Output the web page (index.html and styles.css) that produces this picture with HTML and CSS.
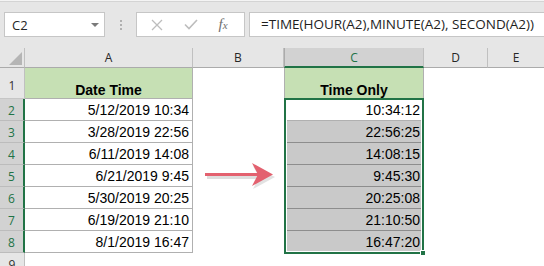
FILE: index.html
```html
<!DOCTYPE html>
<html lang="en">
<head>
	<meta charset="UTF-8">
	<title>Time Only</title>
	<link rel="stylesheet" href="styles.css">
</head>
<body>
	<div class="toolbar">
		<div class="namebox"><span>C2</span><i class="caret"></i></div>
		<div class="grip"><i></i><i></i><i></i></div>
		<div class="fxbtns">
			<svg class="ico" width="12" height="12" viewBox="0 0 12 12"><path d="M1 1L11 11M11 1L1 11" stroke="#bdbdbd" stroke-width="1.3" fill="none"/></svg>
			<svg class="ico" width="14" height="11" viewBox="0 0 14 11"><path d="M1 5.5L5 9.5L13 1" stroke="#bdbdbd" stroke-width="1.6" fill="none"/></svg>
			<span class="fx">f<small>x</small></span>
		</div>
		<div class="formula">=TIME(HOUR(A2),MINUTE(A2), SECOND(A2))</div>
	</div>

	<div class="sheet">
		<!-- column headers -->
		<div class="corner"><i></i></div>
		<div class="colhead">A</div>
		<div class="colhead">B</div>
		<div class="colhead sel">C</div>
		<div class="colhead">D</div>
		<div class="colhead last">E</div>

		<!-- row headers -->
		<div class="rowhead" style="grid-row:2">1</div>
		<div class="rowhead sel" style="grid-row:3">2</div>
		<div class="rowhead sel" style="grid-row:4">3</div>
		<div class="rowhead sel" style="grid-row:5">4</div>
		<div class="rowhead sel" style="grid-row:6">5</div>
		<div class="rowhead sel" style="grid-row:7">6</div>
		<div class="rowhead sel" style="grid-row:8">7</div>
		<div class="rowhead sel" style="grid-row:9">8</div>
		<div class="rowhead" style="grid-row:10">9</div>

		<!-- column A -->
		<div class="cell colA title" style="grid-row:2">Date Time</div>
		<div class="cell colA" style="grid-row:3">5/12/2019 10:34</div>
		<div class="cell colA" style="grid-row:4">3/28/2019 22:56</div>
		<div class="cell colA" style="grid-row:5">6/11/2019 14:08</div>
		<div class="cell colA" style="grid-row:6">6/21/2019 9:45</div>
		<div class="cell colA" style="grid-row:7">5/30/2019 20:25</div>
		<div class="cell colA" style="grid-row:8">6/19/2019 21:10</div>
		<div class="cell colA" style="grid-row:9">8/1/2019 16:47</div>

		<!-- arrow in B5 -->
		<div class="arrow">
			<svg width="72" height="30" viewBox="0 0 72 30">
				<path d="M2 14.5H56" stroke="#c9c9c9" stroke-width="3" opacity=".6" transform="translate(1 2)"/>
				<polygon points="48,3 70,14 48,26 54,14" fill="#cfcfcf" opacity=".6" transform="translate(1 2)"/>
				<path d="M1 13.5H56" stroke="#e3616f" stroke-width="3"/>
				<polygon points="48,2 69,13.5 48,25 54,13.5" fill="#e3616f"/>
			</svg>
		</div>

		<!-- column C -->
		<div class="cell colC title" style="grid-row:2">Time Only</div>
		<div class="cell colC" style="grid-row:3">10:34:12</div>
		<div class="cell colC shade" style="grid-row:4">22:56:25</div>
		<div class="cell colC shade" style="grid-row:5">14:08:15</div>
		<div class="cell colC shade" style="grid-row:6">9:45:30</div>
		<div class="cell colC shade" style="grid-row:7">20:25:08</div>
		<div class="cell colC shade" style="grid-row:8">21:10:50</div>
		<div class="cell colC shade" style="grid-row:9">16:47:20</div>

		<div class="selection"><i class="handle"></i></div>
	</div>
</body>
</html>
```

FILE: styles.css
```css
*{
	margin: 0;
	padding: 0;
	box-sizing: border-box;
}
body{
	width: 544px;
	height: 266px;
	overflow: hidden;
	background-color: #fff;
	font-family: "Liberation Sans", Arial, sans-serif;
}

/* formula bar */
.toolbar{
	height: 48px;
	display: flex;
	align-items: flex-start;
	padding-top: 11px;
	background-color: #e6e6e6;
	border-top: 1px solid #f4f4f4;
	box-shadow: inset 0 1px #d4d4d4;
	font-family: "Open Sans", sans-serif;
}
.toolbar .namebox{
	width: 101px;
	height: 25px;
	margin-left: 4px;
	padding: 0 5px 0 7px;
	display: flex;
	align-items: center;
	justify-content: space-between;
	background-color: #fff;
	border: 1px solid #c6c6c6;
	font-size: 13px;
	color: #262626;
}
.toolbar .caret{
	width: 0;
	height: 0;
	border-left: 4px solid transparent;
	border-right: 4px solid transparent;
	border-top: 4px solid #7a7a7a;
}
.toolbar .grip{
	width: 31px;
	height: 25px;
	display: flex;
	flex-direction: column;
	align-items: center;
	justify-content: center;
	gap: 2px;
}
.toolbar .grip i{
	width: 2px;
	height: 2px;
	background-color: #b0b0b0;
}
.toolbar .fxbtns{
	width: 109px;
	height: 25px;
	display: flex;
	align-items: center;
	justify-content: space-around;
	padding: 0 6px 0 4px;
	background-color: #fff;
	border: 1px solid #c6c6c6;
}
.toolbar .fx{
	font-family: "Liberation Serif", serif;
	font-style: italic;
	font-size: 15px;
	color: #707070;
}
.toolbar .fx small{
	font-size: 11px;
}
.toolbar .formula{
	flex: 1;
	height: 25px;
	margin-left: 4px;
	padding-left: 11px;
	line-height: 23px;
	white-space: nowrap;
	background-color: #fff;
	border: 1px solid #c6c6c6;
	border-right: none;
	font-size: 13.5px;
	color: #1e1e1e;
}

/* sheet */
.sheet{
	display: grid;
	grid-template-columns: 25px 168px 91px 140px 64px 1fr;
	grid-template-rows: 20px 31px repeat(7, 22px) 22px;
}
.sheet .corner{
	grid-row: 1;
	grid-column: 1;
	position: relative;
	background-color: #e6e6e6;
	border-right: 1px solid #c0c0c0;
	border-bottom: 1px solid #ababab;
}
.sheet .corner i{
	position: absolute;
	right: 2px;
	bottom: 2px;
	width: 0;
	height: 0;
	border-left: 13px solid transparent;
	border-bottom: 13px solid #b5b5b5;
}
.sheet .colhead{
	grid-row: 1;
	display: flex;
	align-items: center;
	justify-content: center;
	background-color: #e6e6e6;
	border-right: 1px solid #c0c0c0;
	border-bottom: 1px solid #ababab;
	font-family: "Open Sans", sans-serif;
	font-size: 12px;
	color: #262626;
}
.sheet .colhead.last{
	border-right: none;
}
.sheet .colhead.sel{
	background-color: #d2d2d2;
	border-left: 1px solid #ababab;
	border-bottom: 2px solid #217346;
	color: #217346;
}
.sheet .rowhead{
	grid-column: 1;
	display: flex;
	align-items: center;
	justify-content: center;
	padding-top: 1px;
	background-color: #e6e6e6;
	border-right: 1px solid #c0c0c0;
	border-bottom: 1px solid #c6c6c6;
	font-family: "Open Sans", sans-serif;
	font-size: 12px;
	color: #333;
}
.sheet .rowhead:nth-of-type(7){
	align-items: flex-end;
	padding-bottom: 4px;
}
.sheet .rowhead.sel{
	background-color: #d2d2d2;
	border-right: 2px solid #217346;
	border-bottom-color: #bcbcbc;
	color: #217346;
}

.sheet .cell{
	display: flex;
	align-items: center;
	justify-content: flex-end;
	padding: 1px 3px 0 0;
	border-bottom: 1px solid #b0b0b0;
	font-size: 14px;
	color: #000;
	white-space: nowrap;
}
.sheet .colA{
	grid-column: 2;
	border-right: 1px solid #b0b0b0;
}
.sheet .colC{
	grid-column: 4;
	border-left: 1px solid #b0b0b0;
	border-right: 1px solid #b0b0b0;
}
.sheet .cell.title{
	justify-content: center;
	align-items: flex-end;
	padding: 0;
	background-color: #c6e0b4;
	font-weight: bold;
}
.sheet .cell.shade{
	background-color: #c9c9c9;
	border-bottom-color: #8d8d8d;
}
.sheet .arrow{
	grid-row: 6;
	grid-column: 3;
	display: flex;
	align-items: center;
	padding-left: 11px;
	overflow: visible;
}
.sheet .arrow svg{
	overflow: visible;
}
.sheet .selection{
	grid-row: 3 / 10;
	grid-column: 4;
	margin: -1px 0;
	position: relative;
	border: 2px solid #217346;
	box-shadow: inset 0 0 0 1px #fff;
}
.sheet .selection .handle{
	position: absolute;
	right: -4px;
	bottom: -4px;
	width: 6px;
	height: 6px;
	background-color: #217346;
	border: 1px solid #fff;
}
```
